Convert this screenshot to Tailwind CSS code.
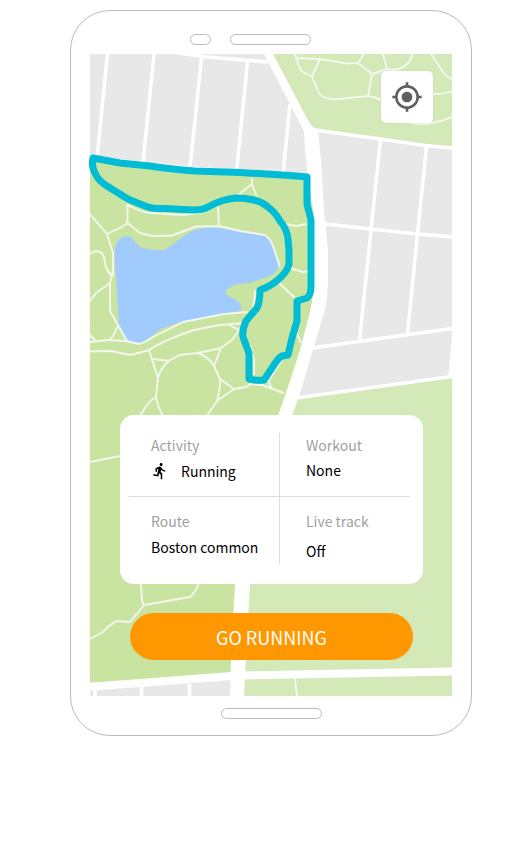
<!DOCTYPE html>
<html lang="en">
<head>
<meta charset="utf-8">
<meta name="viewport" content="width=device-width, initial-scale=1">
<title>Go running</title>
<script src="https://cdn.jsdelivr.net/npm/@tailwindcss/browser@4"></script>
</head>
<body class="min-h-screen bg-white pl-[70px] pr-12 pt-[10px] font-['Noto_Sans_CJK_SC',sans-serif] text-sm leading-6 text-black">
<main class="flex w-full max-w-[402px] flex-col rounded-[40px] border border-[#bbbbbb] px-[19px] pt-[23px] pb-4">
  <div class="mb-[9px] flex gap-[19px] pl-[100px]">
    <span class="h-[11px] w-[21px] rounded-full border border-[#bbbbbb]"></span>
    <span class="h-[11px] w-[81px] rounded-full border border-[#bbbbbb]"></span>
  </div>

  <section class="relative flex min-h-[642px] flex-col" aria-label="Map">
    <svg class="absolute inset-0 h-full w-full overflow-visible" viewBox="90 54 362 642" preserveAspectRatio="xMidYMid slice" fill="none" role="img" aria-label="Route around the lake">
      <clipPath id="screen"><rect x="90" y="54" width="362" height="642"/></clipPath>
      <g clip-path="url(#screen)">
        <rect x="90" y="54" width="362" height="642" fill="#e8e8e8"/>
        <path fill="#d3e9b7" d="M268 54H452V146L425 144L316 129L306 120Z"/>
        <path fill="#d3e9b7" d="M290 397L452 376V696H238V560Z"/>
        <path fill="#c9e4a0" d="M90 159L180 167L308 176L313 215L314 290L303 350L285 415L243 584L238 675L90 684Z"/>
        <path fill="#a2cbfd" d="M115 248Q118 236 127 236Q132 236 136 243Q140 248 147 249L155 250H163Q167 249 172 245L185 235Q195 228 213 227Q230 230 243 232L265 236Q271 238 273 246L279 266Q277 272 270 276Q258 280 250 283L239 284Q224 288 226 294L239 302Q243 307 240 311L222 315Q190 319 175 324Q160 328 153 335L142 343L127 341L119 326L115 262Z"/>
        <!-- Footpaths -->
        <g stroke="#f4f7ee" stroke-width="1.9" stroke-linejoin="round">
          <path d="M295 54C297 60 298 68 303 72L312 76.5M297 58L320 59L347 63.5L358 63L364 54M320 59L312 76.5L318 91Q321 99 334 99.5L368 96L372 74L358 63M368 96Q376 97 383 101M372 74L387 69L383 54M387 69Q400 72 408 63Q412 59 412 54M431 54L441 69Q447 78 452 79M433 94Q445 94 452 91M409 122Q425 128 452 117"/>
          <path d="M90 214L107 234L120 228L127.500 223V204M127.500 223L140 233L153 236L172 235.500L196 226.500L219 226L240 231L265 235Q270 238 273 246L280 267M219 226L218 206M128 205Q140 212 150 213L183 215L205 212M107 234L113 253V276M90 254L95 251Q102 251 104 257Q106 272 110 274L113 276M113 270L112 276L110 283L96 293L90 301M106 268L112 276M110 283V311L127 341M117 327Q114 337 109 340M90 335L95 340M90 342L108 340L126 341L139 344Q144 343 153 337L183 322L224 314L248 312M90 351.500L112 351L127 354.500H133L149 350Q162 341 194 330L220 325L245 323"/>
          <path d="M229 325L239 330L232 340L221 348L198 353L180 355L170 360Q160 368 158 378L156 397Q157 405 163 416M149 350L158 378M153 359L170 361M156 397Q149 400 140 416M198 353Q209 357 214 366L220 379Q221 385 217 401M221 348L214 366M220 379L234 389L246 387L252 383M234 389L217 401L206 417M250 384L262 385L284 393M268 380L272 389M269 380L284 357M297 333L301 343M278 282L295 298M252 178V184L238 195M252 184L258 200M285 224L296 226L307 224M290 268L303 272L310 271M255 290Q255 300 252 312M250 345L254 360V375"/>
          <path d="M90 462L120 456M141 584L142 601L144 605L190 597Q196 592 199 582M144 605L130 622L118 621Q112 622 103 632L90 639M295 678L297 696"/>
        </g>
        <!-- Streets -->
        <g stroke="#fff" stroke-width="3.500">
          <path d="M107.500 54L97 158M154 54L143 163M201.500 58L190 168M247.500 62L236.500 172M290 104L283 175M172 52L206 57L268 62M90 158L180 167L308 177M315 130L380 139L425 145.500L452 148M380.500 139L359.500 341M426.500 146L407.500 333M322 223.500L370 229L418 234L452 237M312 348L452 328.500M454 335L450 376M296 398L452 376.500M95 690V696M141.500 686V696M189.500 684V696"/>
          <path stroke-width="8" d="M88 687L232 676"/>
          <path stroke-width="8" d="M240 675.500L454 671.500"/>
        </g>
        <path fill="#fff" d="M264 54L290 104L304 131L305 150L308 180L314 210L314 290L311 308L300 350L288 387L278 416L235 584L231 660L230 696H244L250 584L292 416L301 390L314 346L325 310Q328 295 328 280V250L324 210L321 160L318 131L310 124L273 54Z"/>
      </g>
      <path stroke="#00bcd4" stroke-width="7" stroke-linejoin="round" stroke-linecap="round" d="M93 158Q91 167 96 175Q99 181 107 186L115 191L128 199L145 206Q152 209 165 208.500L193 210Q203 210 208 207Q222 199 236 198Q245 198 254 200Q262 202 268 207Q276 213 280 221Q287 229 288 239L289 250V264Q288 270 281 277Q272 286 260 290Q260 302 257 308L246 321Q242 330 243 337L249 353V379Q257 381 264 380L272 368Q278 358 282 356L288 355L292 338L297 321V301L307 298Q311 295 311 286V220L307 204V177L290 175.500L240 172.500L195 171Q170 169 150 166L120 163Z"/>
    </svg>

    <div class="relative flex grow flex-col pt-[17px] pb-9">
      <button type="button" aria-label="Center on my location" class="mr-[19px] flex size-[52px] items-center justify-center self-end rounded-[5px] bg-white shadow-[0_0_2px_rgba(0,0,0,0.1)]">
        <svg class="size-8" viewBox="0 0 24 24" fill="#606062" aria-hidden="true"><path d="M12 8c-2.210 0-4 1.790-4 4s1.790 4 4 4 4-1.790 4-4-1.790-4-4-4zm8.940 3c-.46-4.170-3.770-7.480-7.940-7.940V1h-2v2.060C6.830 3.520 3.520 6.830 3.060 11H1v2h2.060c.46 4.170 3.770 7.480 7.940 7.940V23h2v-2.060c4.170-.46 7.480-3.770 7.940-7.940H23v-2h-2.060zM12 19c-3.870 0-7-3.130-7-7s3.130-7 7-7 7 3.130 7 7-3.130 7-7 7z"/></svg>
      </button>

      <dl class="mx-[30px] mt-auto mr-[29px] grid grid-cols-[151fr_130fr] rounded-[14px] bg-white pt-[18px] pr-[13px] pb-5 pl-[9px]">
        <div class="flex h-16 flex-col gap-[2px] border-r border-b border-[#dddddd] pl-[22px]">
          <dt class="text-[#9f9f9f]">Activity</dt>
          <dd class="flex items-center gap-3">
            <svg class="size-[18px]" viewBox="0 0 24 24" fill="#000" aria-hidden="true"><path d="M13.490 5.480c1.100 0 2-.9 2-2s-.9-2-2-2-2 .9-2 2 .9 2 2 2zm-3.600 13.900l1-4.400 2.100 2v6h2v-7.500l-2.100-2 .6-3c1.300 1.500 3.300 2.500 5.500 2.500v-2c-1.900 0-3.500-1-4.300-2.400l-1-1.600c-.4-.6-1-1-1.700-1-.3 0-.5.1-.8.1l-5.200 2.200v4.700h2v-3.400l1.800-.7-1.600 8.100-4.900-1-.4 2 7 1.400z"/></svg>
            Running
          </dd>
        </div>
        <div class="flex h-16 flex-col gap-px border-b border-[#dddddd] pl-[26px]">
          <dt class="text-[#9f9f9f]">Workout</dt>
          <dd>None</dd>
        </div>
        <div class="flex flex-col gap-[2px] border-r border-[#dddddd] pt-3 pb-[5px] pl-[22px]">
          <dt class="text-[#9f9f9f]">Route</dt>
          <dd class="whitespace-nowrap">Boston common</dd>
        </div>
        <div class="flex flex-col gap-[6px] pt-3 pl-[26px]">
          <dt class="text-[#9f9f9f]">Live track</dt>
          <dd>Off</dd>
        </div>
      </dl>

      <button type="button" class="mx-10 mt-[29px] mr-[39px] h-[47px] rounded-full bg-[#ff9800] text-lg text-white">GO RUNNING</button>
    </div>
  </section>

  <span class="mt-3 h-[11px] w-[101px] self-center rounded-full border border-[#bbbbbb]"></span>
</main>
</body>
</html>
